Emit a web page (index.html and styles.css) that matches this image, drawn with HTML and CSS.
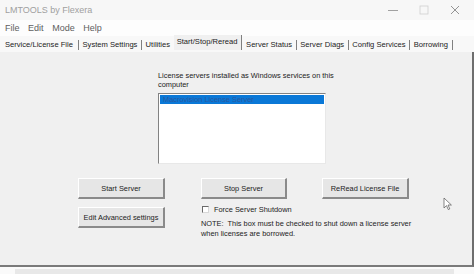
FILE: index.html
```html
<!DOCTYPE html>
<html>
<head>
<meta charset="utf-8">
<link rel="stylesheet" href="styles.css">
</head>
<body>
<div class="window">
  <div class="titlebar">
    <span class="title">LMTOOLS by Flexera</span>
    <div class="controls">
      <svg class="ctl" width="10" height="10" viewBox="0 0 10 10"><path d="M0 5.5H10" stroke="#8a8a8a" stroke-width="0.8"/></svg>
      <svg class="ctl" width="10" height="10" viewBox="0 0 10 10"><rect x="1" y="1" width="8" height="8" fill="none" stroke="#cfcfcf" stroke-width="0.8"/></svg>
      <svg class="ctl" width="10" height="10" viewBox="0 0 10 10"><path d="M1 1L9 9M9 1L1 9" stroke="#7a7a7a" stroke-width="0.8"/></svg>
    </div>
  </div>
  <div class="menubar">
    <span>File</span><span>Edit</span><span>Mode</span><span>Help</span>
  </div>
  <div class="tabs">
    <span class="tab first">Service/License File</span>
    <span class="tab">System Settings</span>
    <span class="tab util">Utilities</span>
    <span class="tab active">Start/Stop/Reread</span>
    <span class="tab">Server Status</span>
    <span class="tab">Server Diags</span>
    <span class="tab">Config Services</span>
    <span class="tab">Borrowing</span>
  </div>
  <div class="panel">
    <div class="services">
      <div class="label">License servers installed as Windows services on this computer</div>
      <div class="listbox">
        <div class="item">Macrovision License Server</div>
      </div>
    </div>
    <div class="actions">
      <div class="leftcol">
        <button class="btn">Start Server</button>
        <button class="btn">Edit Advanced settings</button>
      </div>
      <div class="rightcol">
        <div class="btnrow">
          <button class="btn w-stop">Stop Server</button>
          <button class="btn w-reread">ReRead License File</button>
        </div>
        <label class="check"><span class="box"></span>Force Server Shutdown</label>
        <div class="note">NOTE:&nbsp; This box must be checked to shut down a license server<br>when licenses are borrowed.</div>
      </div>
      <svg class="cursor" width="10" height="14" viewBox="0 0 10 14"><path d="M1 1V11L3.5 8.6L5.3 12.6L6.8 11.9L5 8H8.4Z" fill="#fff" stroke="#555" stroke-width="0.7" stroke-linejoin="round"/></svg>
    </div>
  </div>
  <div class="bottom"><div class="strip"></div></div>
</div>
</body>
</html>
```
FILE: styles.css
```css
html, body {
  margin: 0;
  padding: 0;
}
body {
  background: #f0f0f0;
  font-family: "Liberation Sans", Arial, sans-serif;
  font-size: 7.4px;
  color: #222;
}
.window {
  width: 474px;
  height: 274px;
  overflow: hidden;
  background: #f0f0f0;
}
.titlebar {
  height: 20px;
  background: #f7f7f7;
  display: flex;
  align-items: center;
  padding-left: 5px;
}
.title {
  color: #a0a0a0;
  font-size: 9px;
}
.controls {
  margin-left: auto;
  display: flex;
  gap: 21px;
  padding-right: 14px;
}
.ctl {
  display: block;
}
.menubar {
  height: 16px;
  background: #fdfdfd;
  display: flex;
  align-items: center;
  padding-left: 5px;
  gap: 8.6px;
  color: #606060;
  font-size: 9px;
}
.tabs {
  height: 16px;
  background: #f8f8f8;
  display: flex;
  align-items: center;
  padding-left: 1px;
  font-size: 7.6px;
}
.tab {
  padding: 0 3.6px;
  border-right: 1px solid #808080;
  line-height: 10px;
  margin-top: 2px;
}
.tab.first {
  padding: 0 5px 0 4px;
}
.tab.util {
  border-right: none;
  margin-right: 0;
}
.tab.active {
  background: #f0f0f0;
  margin-top: -3px;
  padding: 2px 4px 3px 3px;
  line-height: 10px;
}
.panel {
  height: 213px;
  border-right: 2px solid #6e6e6e;
  border-bottom: 2px solid #7a7a7a;
  background: #f0f0f0;
  display: flex;
  flex-direction: column;
  position: relative;
}
.services {
  margin-left: 158px;
  padding-top: 19px;
}
.label {
  width: 185px;
  line-height: 9px;
}
.listbox {
  margin-top: 4px;
  width: 166px;
  height: 68px;
  background: #fff;
  border-top: 1px solid #828282;
  border-left: 1px solid #828282;
  border-right: 1px solid #e8e8e8;
  border-bottom: 1px solid #e8e8e8;
  padding-top: 1px;
}
.item {
  background: #0a78d7;
  color: #2a58a0;
  height: 9px;
  line-height: 9px;
  padding-left: 3px;
  margin: 0 1px;
}
.actions {
  display: flex;
  margin-top: 14px;
  margin-left: 78px;
  gap: 36px;
}
.leftcol {
  display: flex;
  flex-direction: column;
  gap: 8px;
}
.btn {
  font-family: inherit;
  font-size: 7.4px;
  color: #222;
  background: #e6e6e6;
  width: 87px;
  height: 21px;
  border-top: 1px solid #fff;
  border-left: 1px solid #fff;
  border-right: 2px solid #8a8a8a;
  border-bottom: 2px solid #8a8a8a;
  padding: 0;
  margin: 0;
  display: block;
}
.w-stop { width: 86px; }
.w-reread { width: 87px; }
.rightcol {
  display: flex;
  flex-direction: column;
}
.btnrow {
  display: flex;
  gap: 35px;
}
.check {
  display: flex;
  align-items: center;
  margin-top: 6px;
  margin-left: 1px;
  line-height: 9px;
}
.box {
  width: 5px;
  height: 5px;
  border-top: 1px solid #6a6a6a;
  border-left: 1px solid #6a6a6a;
  border-right: 1px solid #d8d8d8;
  border-bottom: 1px solid #d8d8d8;
  background: #fff;
  margin-right: 5px;
}
.note {
  margin-top: 5px;
  line-height: 9.5px;
  white-space: nowrap;
}
.cursor {
  position: absolute;
  left: 443px;
  top: 145px;
}
.bottom {
  height: 5px;
  background: #fafafa;
  padding: 2px 20px 0 15px;
}
.strip {
  height: 5px;
  background: #e8e8e8;
}
```
